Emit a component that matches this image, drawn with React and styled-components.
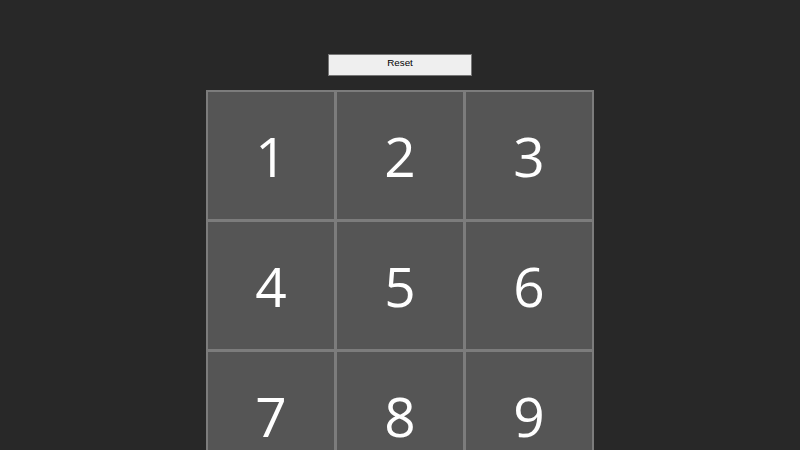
import React, { useState } from 'react';
import styled, { createGlobalStyle } from 'styled-components';

const GlobalStyle = createGlobalStyle`
  html, body {
    margin: 0;
    padding: 0;
    background: #282828;
    overflow: hidden;
  }
`

const Page = styled.div`
  display: flex;
  flex-direction: column;
  align-items: center;
  padding-top: 54px;
`

const ResetButton = styled.button`
  flex-shrink: 0;
  box-sizing: border-box;
  width: 144px;
  height: 22px;
  background: #efefef;
  border: 1px solid #767676;
  border-radius: 0;
  font-family: "Liberation Sans", Arial, sans-serif;
  font-size: 9.8px;
  color: #000;
  padding: 0 0 5px;
  cursor: pointer;
`

// the grey lines are the board showing through the gaps
const Board = styled.div`
  margin-top: 14px;
  display: grid;
  grid-template-columns: repeat(3, 126px);
  grid-auto-rows: 127px;
  gap: 3px;
  padding: 2px;
  background: #7c7c7c;
`

const Cell = styled.div`
  background: #555555;
  display: flex;
  align-items: center;
  justify-content: center;
  font-family: "Open Sans", "Noto Sans", sans-serif;
  font-size: 55px;
  color: #ffffff;
  user-select: none;
`

const initial = [1, 2, 3, 4, 5, 6, 7, 8, 9];

export default function App() {
  const [cells, setCells] = useState(initial);

  return (
    <>
      <GlobalStyle />
      <Page>
        <ResetButton onClick={() => setCells(initial)}>Reset</ResetButton>
        <Board>
          {cells.map(n => (
            <Cell key={n}>{n}</Cell>
          ))}
        </Board>
      </Page>
    </>
  );
}
